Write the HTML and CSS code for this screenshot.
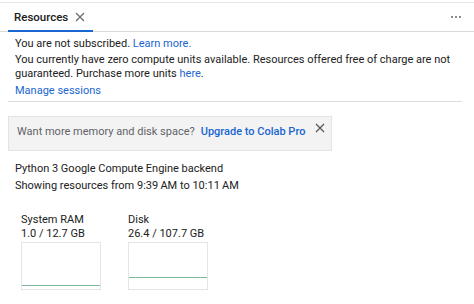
FILE: index.html
```html
<!DOCTYPE html>
<html lang="en">
  <head>
    <meta charset="UTF-8" />
    <title>Resources</title>
    <link rel="stylesheet" href="styles.css">
  </head>
  <body>
    <div class="tabs">
      <div class="tab">
        <span class="tab__title">Resources</span>
        <svg class="tab__close" width="10" height="10" viewBox="0 0 10 10">
          <path d="M1 1L9 9M9 1L1 9" stroke="#6b6b6b" stroke-width="1.2" />
        </svg>
      </div>
      <div class="tabs__more">
        <span></span><span></span><span></span>
      </div>
    </div>

    <div class="panel">
      <div class="notice">
        <p>You are not subscribed. <a href="#">Learn more.</a></p>
        <p>You currently have zero compute units available. Resources offered free of charge are not guaranteed. Purchase more units <a href="#">here</a>.</p>
        <p class="notice__manage"><a href="#">Manage sessions</a></p>
      </div>

      <div class="promo">
        <span class="promo__text">Want more memory and disk space?</span>
        <a class="promo__link" href="#">Upgrade to Colab Pro</a>
        <svg class="promo__close" width="10" height="10" viewBox="0 0 10 10">
          <path d="M1 1L9 9M9 1L1 9" stroke="#555" stroke-width="1.2" />
        </svg>
      </div>

      <div class="backend">
        <p>Python 3 Google Compute Engine backend</p>
        <p>Showing resources from 9:39&#8201;AM to 10:11&#8201;AM</p>
      </div>

      <div class="charts">
        <div class="chart">
          <div class="chart__label">System RAM</div>
          <div class="chart__label">1.0 / 12.7 GB</div>
          <div class="chart__box">
            <div class="chart__line" style="bottom: 3px"></div>
          </div>
        </div>
        <div class="chart">
          <div class="chart__label">Disk</div>
          <div class="chart__label">26.4 / 107.7 GB</div>
          <div class="chart__box">
            <div class="chart__line" style="bottom: 11px"></div>
          </div>
        </div>
      </div>
    </div>
  </body>
</html>
```

FILE: styles.css
```css
body {
  margin: 0;
  background-color: #fff;
  color: #212121;
  font-family: Roboto, "Liberation Sans", sans-serif;
  font-size: 11px;
}

p {
  margin: 0;
}

a {
  color: #1a66d2;
  text-decoration: none;
}

.tabs {
  display: flex;
  align-items: stretch;
  justify-content: space-between;
  height: 28px;
  margin-top: 2px;
  border-top: 1px solid #e6e6e6;
  border-bottom: 1px solid #dadada;
}

.tab {
  display: flex;
  align-items: center;
  gap: 7px;
  margin-left: 8px;
  padding: 0 8px 0 6px;
  border-bottom: 2px solid #1a66d2;
  margin-bottom: -1px;
}

.tab__title {
  font-weight: 500;
  color: #202020;
  font-size: 11.5px;
}

.tabs__more {
  display: flex;
  align-items: center;
  gap: 2px;
  padding-right: 13px;
}

.tabs__more span {
  width: 2px;
  height: 2px;
  border-radius: 1px;
  background-color: #666;
}

.panel {
  padding: 5px 8px 0;
}

.notice {
  padding: 0 7px 3px;
  line-height: 14px;
  border-bottom: 1px solid #dcdcdc;
  margin-right: 4px;
}

.notice p + p {
  margin-top: 2px;
}

.notice .notice__manage {
  margin-top: 3px;
}

.promo {
  display: flex;
  align-items: center;
  width: 324px;
  height: 35px;
  box-sizing: border-box;
  margin-top: 14px;
  padding: 0 6px 4px 8px;
  background-color: #f3f3f3;
  border: 1px solid #e3e3e3;
  color: #5f6368;
  white-space: nowrap;
}

.promo__link {
  margin-left: 6px;
  font-weight: 500;
}

.promo__close {
  margin-left: auto;
  margin-bottom: 8px;
}

.backend {
  margin-top: 9px;
  padding-left: 7px;
  line-height: 17px;
}

.charts {
  display: flex;
  gap: 27px;
  margin-top: 19px;
  padding-left: 13px;
}

.chart__label {
  line-height: 14px;
}

.chart__box {
  position: relative;
  width: 78px;
  height: 46px;
  margin-top: 1px;
  border: 1px solid #e4e4e4;
}

.chart__line {
  position: absolute;
  left: 0;
  right: 0;
  height: 1px;
  background-color: #7fb896;
}
```
